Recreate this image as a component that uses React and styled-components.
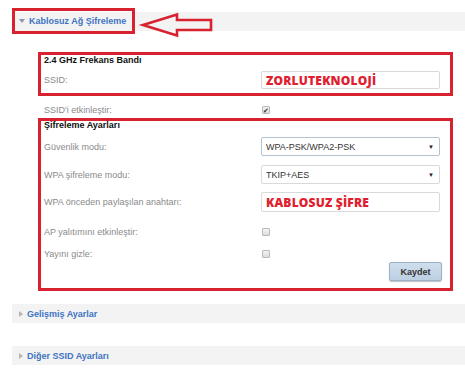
import React from 'react';
import styled, { createGlobalStyle } from 'styled-components';

const Global = createGlobalStyle`
  body {
    margin: 0;
    background: #fff;
    font-family: Arial, "Liberation Sans", sans-serif;
  }
`;

const RED = '#d8222f';

const Page = styled.div`
  width: 465px;
  height: 371px;
  padding-top: 12px;
  box-sizing: border-box;
  overflow: hidden;
`;

const Bar = styled.div`
  margin-left: 12px;
  margin-top: ${(p) => p.$mt || 0}px;
  height: 19px;
  background: #f3f3f3;
  display: flex;
  align-items: center;
`;

const BarTitle = styled.div`
  display: flex;
  align-items: center;
  gap: 4px;
  padding-left: ${(p) => (p.$boxed ? 4 : 7)}px;
  color: #3f74c2;
  font-weight: bold;
  font-size: 9px;
  white-space: nowrap;
`;

const TitleBox = styled.div`
  box-sizing: border-box;
  height: 26px;
  margin-top: -4px;
  margin-bottom: -3px;
  width: 123px;
  border: 3px solid ${RED};
  display: flex;
  align-items: center;
`;

const Tri = styled.span`
  width: 0;
  height: 0;
  ${(p) =>
    p.$open
      ? `border-left: 3px solid transparent; border-right: 3px solid transparent; border-top: 4px solid #8a97a8;`
      : `border-top: 3px solid transparent; border-bottom: 3px solid transparent; border-left: 4px solid #b5b5b5;`}
`;

const Arrow = styled.svg`
  align-self: flex-start;
  margin-top: 1px;
  margin-left: 6px;
  overflow: visible;
`;

const Box = styled.div`
  box-sizing: border-box;
  margin-left: 38px;
  margin-top: ${(p) => p.$mt || 0}px;
  width: 415px;
  border: 3px solid ${RED};
  padding: 0 10px ${(p) => p.$pb}px 3px;
  display: flex;
  flex-direction: column;
`;

const Section = styled.div`
  font-weight: bold;
  font-size: 9px;
  line-height: ${(p) => p.$h}px;
  height: ${(p) => p.$h}px;
  color: #111;
`;

const Row = styled.div`
  display: grid;
  grid-template-columns: 1fr 179px;
  align-items: center;
  margin-top: ${(p) => p.$mt || 0}px;
  height: ${(p) => p.$h}px;
`;

const Plain = styled(Row)`
  margin-left: 44px;
  width: 396px;
`;

const Label = styled.span`
  font-size: 9px;
  color: #8a8a8a;
`;

const Control = styled.div`
  box-sizing: border-box;
  height: ${(p) => p.$h || 19}px;
  border: 1px solid ${(p) => (p.$focus ? '#b3c3d3' : '#d9d9d9')};
  border-radius: 2px;
  background: #fff;
  display: flex;
  align-items: center;
  justify-content: space-between;
  padding: 0 5px 0 4px;
  font-size: 9px;
  color: #333;
`;

const Value = styled.span`
  font-family: "Open Sans", Arial, sans-serif;
  font-weight: 800;
  font-size: 12px;
  color: #e0202e;
  letter-spacing: 0.2px;
`;

const Caret = styled.span`
  font-size: 6px;
  color: #222;
`;

const Check = styled.span`
  box-sizing: border-box;
  width: 8px;
  height: 8px;
  margin-left: 1px;
  border: 1px solid #b9b9b9;
  border-radius: 1px;
  background: linear-gradient(#f4f4f4, #dcdcdc);
  display: flex;
  align-items: center;
  justify-content: center;
  font-size: 7px;
  line-height: 1;
  color: #333;
`;

const Footer = styled.div`
  display: flex;
  justify-content: flex-end;
  margin-top: 2px;
  margin-right: -2px;
`;

const Button = styled.button`
  width: 53px;
  height: 19px;
  padding: 0;
  border: 1px solid #9db1c6;
  border-radius: 2px;
  background: linear-gradient(#cfdeec, #bcd0e3);
  box-shadow: 0 1px 1px rgba(0, 0, 0, 0.25);
  font-family: Arial, "Liberation Sans", sans-serif;
  font-weight: bold;
  font-size: 9px;
  color: #333;
`;

export default function App() {
  return (
    <>
      <Global />
      <Page>
        <Bar>
          <TitleBox>
            <BarTitle $boxed>
              <Tri $open />
              Kablosuz Ağ Şifreleme
            </BarTitle>
          </TitleBox>
          <Arrow width="72" height="24" viewBox="0 0 72 24">
            <path
              d="M2 12 L36 1.5 L36 7 L70 7 L70 17 L36 17 L36 22.5 Z"
              fill="none"
              stroke={RED}
              strokeWidth="2.6"
              strokeLinejoin="miter"
            />
          </Arrow>
        </Bar>

        <Box $mt={21} $pb={4}>
          <Section $h={10}>2.4 GHz Frekans Bandı</Section>
          <Row $mt={6} $h={18}>
            <Label>SSID:</Label>
            <Control $h={18}>
              <Value>ZORLUTEKNOLOJİ</Value>
            </Control>
          </Row>
        </Box>

        <Plain $mt={8} $h={12}>
          <Label>SSID'i etkinleştir:</Label>
          <Check>✔</Check>
        </Plain>

        <Box $mt={2} $pb={7}>
          <Section $h={9}>Şifreleme Ayarları</Section>
          <Row $mt={7} $h={19}>
            <Label>Güvenlik modu:</Label>
            <Control $focus>
              WPA-PSK/WPA2-PSK
              <Caret>▼</Caret>
            </Control>
          </Row>
          <Row $mt={9} $h={19}>
            <Label>WPA şifreleme modu:</Label>
            <Control>
              TKIP+AES
              <Caret>▼</Caret>
            </Control>
          </Row>
          <Row $mt={8} $h={20}>
            <Label>WPA önceden paylaşılan anahtarı:</Label>
            <Control $h={20}>
              <Value>KABLOSUZ ŞİFRE</Value>
            </Control>
          </Row>
          <Row $mt={14} $h={12}>
            <Label>AP yalıtımını etkinleştir:</Label>
            <Check />
          </Row>
          <Row $mt={10} $h={12}>
            <Label>Yayını gizle:</Label>
            <Check />
          </Row>
          <Footer>
            <Button>Kaydet</Button>
          </Footer>
        </Box>

        <Bar $mt={13}>
          <BarTitle>
            <Tri />
            Gelişmiş Ayarlar
          </BarTitle>
        </Bar>
        <Bar $mt={23}>
          <BarTitle>
            <Tri />
            Diğer SSID Ayarları
          </BarTitle>
        </Bar>
      </Page>
    </>
  );
}
